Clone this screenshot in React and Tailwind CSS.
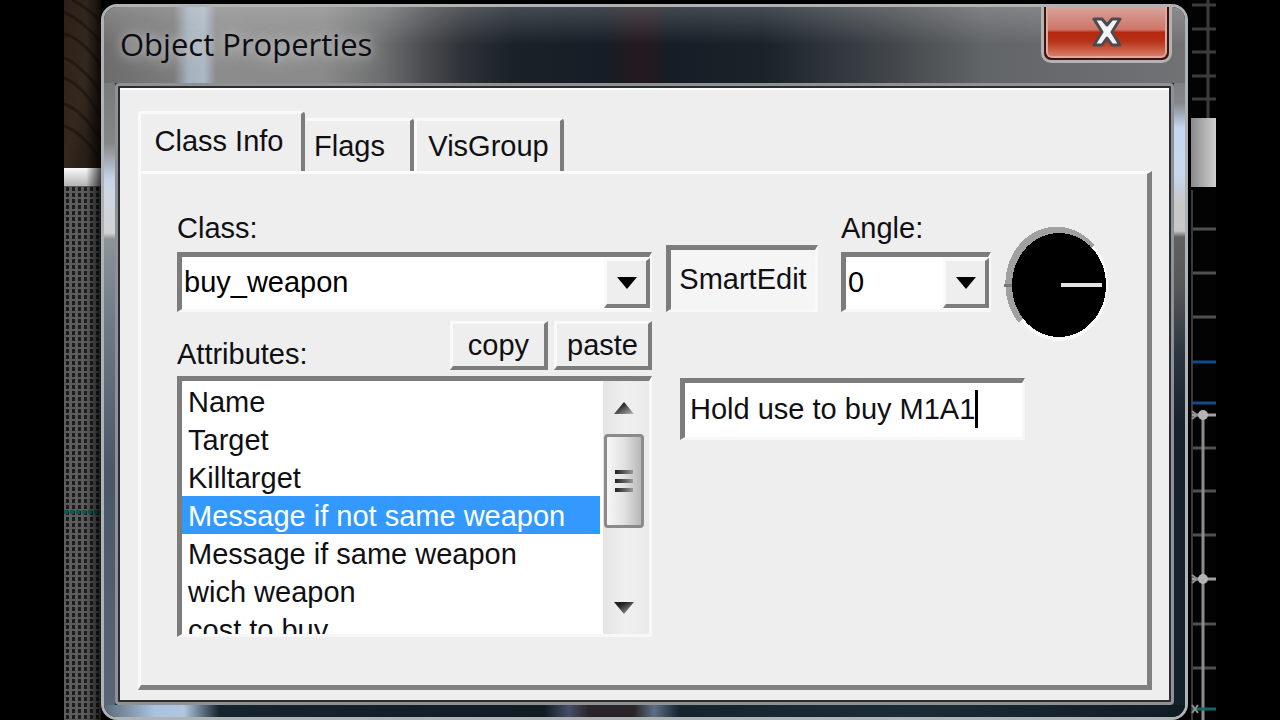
import React, { useState } from 'react';

const attributes = [
  'Name',
  'Target',
  'Killtarget',
  'Message if not same weapon',
  'Message if same weapon',
  'wich weapon',
  'cost to buy',
];

const tabs = ['Class Info', 'Flags', 'VisGroup'];

// Sunken and raised 3D edges shared by all the controls
const sunken = 'border-t-[5px] border-l-[5px] border-r-[3px] border-b-[3px] border-t-[#7c7c7c] border-l-[#7c7c7c] border-r-[#f8f8f8] border-b-[#f8f8f8]';
const raised = 'border-t-[3px] border-l-[3px] border-r-[4px] border-b-[4px] border-t-[#fafafa] border-l-[#fafafa] border-r-[#7c7c7c] border-b-[#7c7c7c]';

// Left side of the editor behind the dialog: texture preview and dotted viewport
const LeftBackdrop = () => (
  <svg className="h-full w-full" aria-hidden="true">
    <defs>
      <pattern id="dots" width="6" height="6" patternUnits="userSpaceOnUse">
        <rect width="6" height="6" fill="#5c5c5c" />
        <rect x="2" y="1" width="3" height="4" fill="#1c1c1c" />
      </pattern>
      <linearGradient id="wood" x1="0" y1="0" x2="1" y2="1">
        <stop offset="0" stopColor="#2c2018" />
        <stop offset="0.5" stopColor="#35281e" />
        <stop offset="1" stopColor="#1c1511" />
      </linearGradient>
      <linearGradient id="bar" x1="0" y1="0" x2="0" y2="1">
        <stop offset="0" stopColor="#fafafa" />
        <stop offset="1" stopColor="#b4b4b4" />
      </linearGradient>
      <linearGradient id="edge" x1="0" y1="0" x2="1" y2="0">
        <stop offset="0.6" stopColor="#000" stopOpacity="0" />
        <stop offset="1" stopColor="#000" stopOpacity="0.7" />
      </linearGradient>
    </defs>
    <rect width="37" height="168" fill="url(#wood)" />
    <g fill="none" stroke="#120c08" strokeWidth="3" opacity="0.45">
      <path d="M0 12Q18 20 37 42M0 34Q18 38 37 66M0 58Q16 64 37 92M0 78Q20 86 37 118M0 104Q18 110 37 140M0 126Q18 132 37 160M8 0Q24 8 37 22" />
    </g>
    <rect y="168" width="37" height="18" fill="url(#bar)" />
    <rect y="186" width="37" height="100%" fill="url(#dots)" />
    <path d="M0 512H37" stroke="#0d5a50" strokeWidth="4" strokeDasharray="4 2" />
    <rect width="37" height="100%" fill="url(#edge)" />
  </svg>
);

// Right side of the editor: wireframe grid
const RightBackdrop = () => (
  <svg className="h-full w-full" aria-hidden="true">
    <defs>
      <linearGradient id="block" x1="0" y1="0" x2="1" y2="0">
        <stop offset="0" stopColor="#8a8a8a" />
        <stop offset="1" stopColor="#d0d0d0" />
      </linearGradient>
    </defs>
    <rect width="28" height="100%" fill="#030303" />
    <path d="M4 5H28M4 29H28M4 52H28M4 76H28M4 99H28M20 0V118" stroke="#3c3c3c" strokeWidth="3" />
    <rect x="3" y="118" width="25" height="69" fill="url(#block)" />
    <path d="M5 229H28M5 273H28M5 317H28M5 448H28M5 491H28M5 535H28M5 624H28M5 668H28" stroke="#505050" strokeWidth="3" />
    <path d="M4 190V720" stroke="#3a3a3a" strokeWidth="2" />
    <path d="M4 362H28M4 403H28" stroke="#124a8c" strokeWidth="3" />
    <path d="M4 415H28M4 579H28" stroke="#a0a0a0" strokeWidth="3" />
    <path d="M15 415V720" stroke="#8c8c8c" strokeWidth="3" />
    <path d="M4 709H28" stroke="#14686c" strokeWidth="3" />
    <circle cx="15" cy="415" r="5" fill="#b4b4b4" />
    <circle cx="15" cy="579" r="5" fill="#b4b4b4" />
    <path d="M4 411L9 415L4 419M4 575L9 579L4 583M4 705L10 713M10 705L4 713" fill="none" stroke="#909090" strokeWidth="2" />
  </svg>
);

const ComboBox = ({ id, value }) => (
  <div className="relative">
    <select
      id={id}
      defaultValue={value}
      className={`block h-[60px] w-full appearance-none rounded-none bg-white pb-[2px] pl-[2px] text-black outline-none ${sunken}`}
    >
      <option>{value}</option>
    </select>
    <span className={`pointer-events-none absolute top-[6px] right-[2px] flex h-[50px] w-[46px] items-center justify-center bg-[#eee] ${raised}`}>
      <svg width="20" height="12" viewBox="0 0 20 12" aria-hidden="true">
        <path d="M0 0H20L10 12Z" fill="#000" />
      </svg>
    </span>
  </div>
);

const ScrollBar = () => (
  <div className="flex w-[46px] shrink-0 flex-col items-center bg-gradient-to-r from-[#e4e4e4] via-[#f0f0f0] to-[#eaeaea] pr-1">
    <button aria-label="Scroll up" className="flex h-[53px] w-full items-center justify-center">
      <svg width="20" height="12" viewBox="0 0 20 12" aria-hidden="true">
        <defs>
          <linearGradient id="arrow" x1="0" y1="0" x2="1" y2="1">
            <stop offset="0.3" stopColor="#222" />
            <stop offset="1" stopColor="#bbb" />
          </linearGradient>
        </defs>
        <path d="M0 12H20L10 0Z" fill="url(#arrow)" />
      </svg>
    </button>
    <div className="flex h-[94px] w-10 flex-col items-center justify-center gap-[5px] rounded-[4px] border-[3px] border-[#8a8a8a] bg-gradient-to-r from-[#f6f6f6] via-[#e2e2e2] to-[#b8b8b8]">
      <span className="h-1 w-[18px] bg-gradient-to-r from-[#222] to-[#999]" />
      <span className="h-1 w-[18px] bg-gradient-to-r from-[#222] to-[#999]" />
      <span className="h-1 w-[18px] bg-gradient-to-r from-[#222] to-[#999]" />
    </div>
    <button aria-label="Scroll down" className="mt-auto flex h-[53px] w-full items-center justify-center">
      <svg width="20" height="12" viewBox="0 0 20 12" aria-hidden="true">
        <path d="M0 0H20L10 12Z" fill="url(#arrow)" />
      </svg>
    </button>
  </div>
);

const AngleDial = () => (
  <svg width="106" height="120" viewBox="0 0 106 120" shapeRendering="crispEdges" aria-hidden="true">
    <ellipse cx="56" cy="60" rx="49" ry="56" fill="#fafafa" />
    <path d="M91 20A50 56 0 0 0 16 98L54 59Z" fill="#a0a0a0" />
    <path d="M1 60H10" stroke="#777" strokeWidth="3" />
    <ellipse cx="56" cy="60" rx="47" ry="52" fill="#000" />
    <path d="M58 60H99" stroke="#e4e4e4" strokeWidth="4" />
  </svg>
);

const TitleBar = () => (
  <header className="flex h-[76px] shrink-0 items-start justify-between bg-[linear-gradient(180deg,#ffffff30_0%,#ffffff00_50%),linear-gradient(90deg,#6c6c6c_0px,#7c7c7c_70px,#a4b0bc_84px,#acb8c4_100px,#8c8c8c_112px,#8a8a8a_220px,#6c6d6e_280px,#4a4c4f_320px,#2e3237_360px,#1a2129_410px,#161d26_500px,#221a20_530px,#221a20_545px,#161d26_565px,#1a222a_660px,#43474b_790px,#626567_880px,#707274_100%)] pr-[13px]">
    <h1 className="mt-[13px] ml-4 font-['Open_Sans','Noto_Sans',sans-serif] text-[31px] leading-[48px] whitespace-nowrap text-[#0c0c14] [text-shadow:0_0_18px_#ddd,0_0_10px_#aaa]">
      Object Properties
    </h1>
    <button
      aria-label="Close"
      className="flex h-[56px] w-[131px] rounded-b-[10px] border-x-[3px] border-b-[3px] border-[#b4b2b2] bg-[#3c1512] px-[2px] pb-[2px]"
    >
      <span className="flex h-full w-full items-center justify-center rounded-b-[6px] border-x-2 border-b-2 border-[#e0a79d] bg-[linear-gradient(180deg,#d9a39b_0%,#cd7668_46%,#b5280f_52%,#b83218_70%,#d87c64_100%)]">
        <svg width="30" height="30" viewBox="0 0 30 30" aria-hidden="true">
          <path d="M2 2H10L15 8L20 2H28L20 15L28 28H20L15 21L10 28H2L10 15Z" fill="#f4f4f4" stroke="#4c4a52" strokeWidth="3" strokeLinejoin="round" />
        </svg>
      </span>
    </button>
  </header>
);

const ClassInfo = () => {
  const [selected, setSelected] = useState(3);
  const [message, setMessage] = useState('Hold use to buy M1A1');

  return (
    <div className="flex min-h-0 flex-1 gap-[14px] border-t-[3px] border-r-[5px] border-b-[5px] border-l-[3px] border-t-[#fafafa] border-r-[#808080] border-b-[#808080] border-l-[#fafafa] pt-[35px] pb-12 pl-9">
      <div className="flex min-w-0 flex-1 flex-col">
        <label htmlFor="class" className="mb-[5px]">Class:</label>
        <ComboBox id="class" value="buy_weapon" />

        <div className="mt-[9px] flex h-[55px] shrink-0 items-start justify-between">
          <span id="attributes-label" className="mt-[14px]">Attributes:</span>
          <div className="flex gap-[6px]">
            <button className={`h-[49px] w-[98px] leading-[42px] ${raised}`}>copy</button>
            <button className={`h-[49px] w-[98px] leading-[42px] ${raised}`}>paste</button>
          </div>
        </div>

        <div className={`flex min-h-0 flex-1 bg-white ${sunken}`}>
          <ul role="listbox" aria-labelledby="attributes-label" className="min-w-0 flex-1 overflow-hidden pt-px">
            {attributes.map((name, i) => (
              <li
                key={name}
                role="option"
                aria-selected={i === selected}
                onClick={() => setSelected(i)}
                className={`mr-[3px] h-[38px] pl-[6px] leading-10 whitespace-nowrap ${i === selected ? 'bg-[#3399ff] text-white' : ''}`}
              >
                {name}
              </li>
            ))}
          </ul>
          <ScrollBar />
        </div>
      </div>

      <div className="w-[481px] shrink-0">
        <div className="flex h-[103px] items-end">
          <button className={`h-[67px] w-[152px] bg-[#f5f5f5] pb-[2px] ${sunken}`}>SmartEdit</button>
          <div className="ml-[23px] w-[150px]">
            <label htmlFor="angle" className="mb-[5px] block">Angle:</label>
            <ComboBox id="angle" value="0" />
          </div>
          <div className="ml-3 mt-4 self-start">
            <AngleDial />
          </div>
        </div>

        {/* value of the selected attribute */}
        <div className={`mt-[66px] ml-[14px] flex h-[62px] w-[345px] items-center bg-white pb-[2px] pl-[5px] ${sunken}`}>
          <input
            aria-label="Attribute value"
            value={message}
            onChange={(e) => setMessage(e.target.value)}
            className="field-sizing-content bg-transparent outline-none"
          />
          <span className="h-[38px] w-[3px] bg-black" />
        </div>
      </div>
    </div>
  );
};

const App = () => (
  <div className="flex h-screen min-h-[640px] bg-black px-16 font-['Liberation_Sans',Arial,sans-serif] text-[29px] leading-[38px] text-[#101014]">
    <div className="w-[37px] shrink-0">
      <LeftBackdrop />
    </div>

    <main className="mt-1 flex min-w-0 flex-1 flex-col overflow-hidden rounded-[16px] border-[3px] border-[#b0b3b5] bg-[#111c24]">
      <TitleBar />
      <div className="flex min-h-0 flex-1 bg-[#18232c]">
        <div className="w-[11px] shrink-0 bg-[linear-gradient(180deg,#7b7b7b_0px,#868686_60px,#c3d3e6_95px,#cfd8e2_110px,#d2d2d2_150px,#8b9499_156px,#6c7c86_240px,#475766_390px,#586776_100%)]" />
        <div className="flex min-w-0 flex-1 rounded-[4px] border-[3px] border-[#8f9294] bg-[#2c2d30] p-[2px]">
          <section className="flex min-w-0 flex-1 flex-col border-t-2 border-white bg-[#eee] pt-[21px] pr-[17px] pb-[10px] pl-[18px]">
            <div role="tablist" className="flex h-[60px] shrink-0 items-end whitespace-nowrap">
              <button role="tab" aria-selected="true" className="h-[60px] w-[167px] rounded-t-[4px] border-t-[3px] border-r-[4px] border-l-[3px] border-t-[#fafafa] border-r-[#7c7c7c] border-l-[#fafafa] pr-1 pb-1">
                {tabs[0]}
              </button>
              <button role="tab" aria-selected="false" className="h-[53px] w-[109px] rounded-t-[4px] border-t-[3px] border-r-[4px] border-t-[#fafafa] border-r-[#7c7c7c] pr-4">
                {tabs[1]}
              </button>
              <button role="tab" aria-selected="false" className="h-[53px] w-[150px] rounded-t-[4px] border-t-[3px] border-r-[4px] border-l-[3px] border-t-[#fafafa] border-r-[#7c7c7c] border-l-[#fafafa]">
                {tabs[2]}
              </button>
            </div>
            <ClassInfo />
          </section>
        </div>
        <div className="w-[11px] shrink-0 bg-[linear-gradient(180deg,#7d7f81_0px,#85888a_20px,#c4d8f2_45px,#c8d8ee_90px,#c8c8c8_120px,#c8c8c8_148px,#606060_154px,#585858_200px,#2c3642_270px,#18212c_340px,#14202a_100%)]" />
      </div>
      <div className="h-[12px] shrink-0 bg-[linear-gradient(90deg,#5a6a78_0px,#a8c2e0_50px,#b0c6e0_80px,#16242e_115px,#101c24_440px,#454e68_465px,#2a2428_485px,#2a2428_530px,#5c6e84_550px,#16242e_575px,#1c2c36_800px,#101c24_100%)]" />
    </main>

    <div className="w-7 shrink-0">
      <RightBackdrop />
    </div>
  </div>
);

export default App;
